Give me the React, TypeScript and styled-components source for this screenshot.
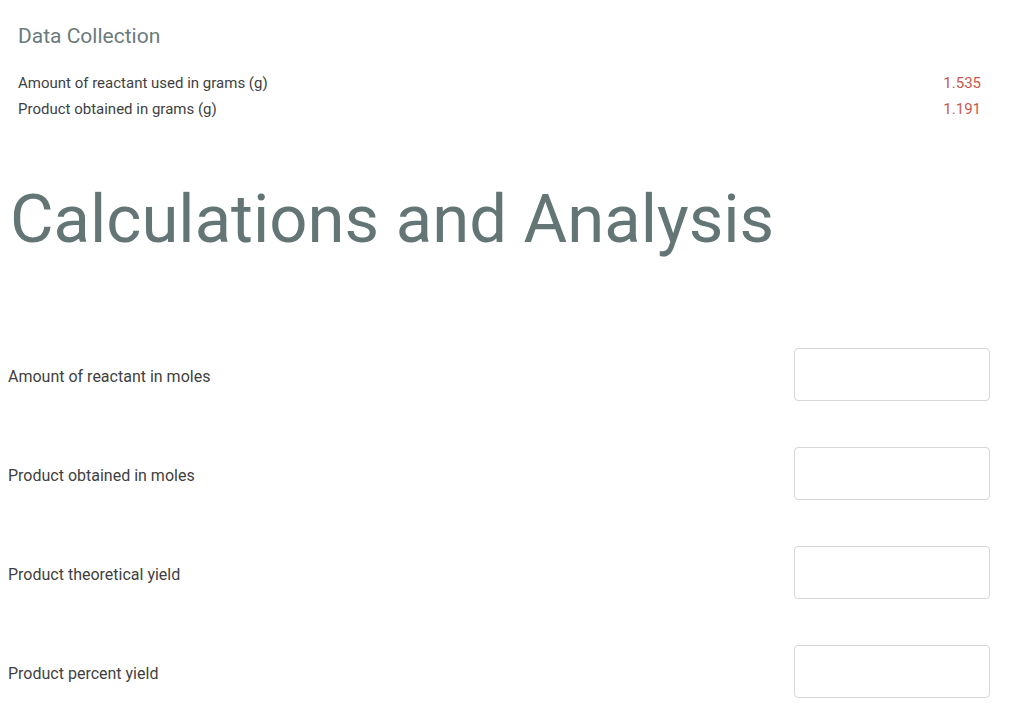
import styled, { createGlobalStyle } from "styled-components";

const GlobalStyle = createGlobalStyle`
  html, body {
    margin: 0;
    padding: 0;
    background: #ffffff;
    font-family: Roboto, "Liberation Sans", Arial, sans-serif;
  }
`;

const Page = styled.div`
  width: 1024px;
  height: 710px;
  overflow: hidden;
  background: #ffffff;
`;

const DataSection = styled.section`
  padding: 24px 43px 0 18px;
`;

const SectionTitle = styled.h3`
  margin: 0 0 21px 0;
  font-size: 21px;
  font-weight: 400;
  line-height: 25px;
  color: #6b7b7b;
`;

const DataRow = styled.div`
  display: flex;
  justify-content: space-between;
  align-items: center;
  height: 26px;
  font-size: 15px;
  color: #3f3f3f;
`;

const DataValue = styled.span`
  color: #c9584b;
`;

const BigTitle = styled.h1`
  margin: 57px 0 0 10px;
  font-size: 67px;
  font-weight: 400;
  line-height: 80px;
  color: #647575;
`;

const Calculations = styled.section`
  display: flex;
  flex-direction: column;
  gap: 46px;
  padding: 89px 34px 0 8px;
`;

const CalcRow = styled.div`
  display: flex;
  justify-content: space-between;
  align-items: center;
`;

const CalcLabel = styled.label`
  font-size: 16px;
  color: #3f3f3f;
  padding-top: 3px;
`;

const AnswerBox = styled.input`
  box-sizing: border-box;
  width: 196px;
  height: 53px;
  border: 1px solid #d6d6d6;
  border-radius: 4px;
  background: #ffffff;
  outline: none;
`;

const dataRows = [
  { label: "Amount of reactant used in grams (g)", value: "1.535" },
  { label: "Product obtained in grams (g)", value: "1.191" },
];

const calcRows = [
  "Amount of reactant in moles",
  "Product obtained in moles",
  "Product theoretical yield",
  "Product percent yield",
];

export default function App() {
  return (
    <Page>
      <GlobalStyle />
      <DataSection>
        <SectionTitle>Data Collection</SectionTitle>
        {dataRows.map((row) => (
          <DataRow key={row.label}>
            <span>{row.label}</span>
            <DataValue>{row.value}</DataValue>
          </DataRow>
        ))}
      </DataSection>
      <BigTitle>Calculations and Analysis</BigTitle>
      <Calculations>
        {calcRows.map((label) => (
          <CalcRow key={label}>
            <CalcLabel>{label}</CalcLabel>
            <AnswerBox type="text" aria-label={label} />
          </CalcRow>
        ))}
      </Calculations>
    </Page>
  );
}
